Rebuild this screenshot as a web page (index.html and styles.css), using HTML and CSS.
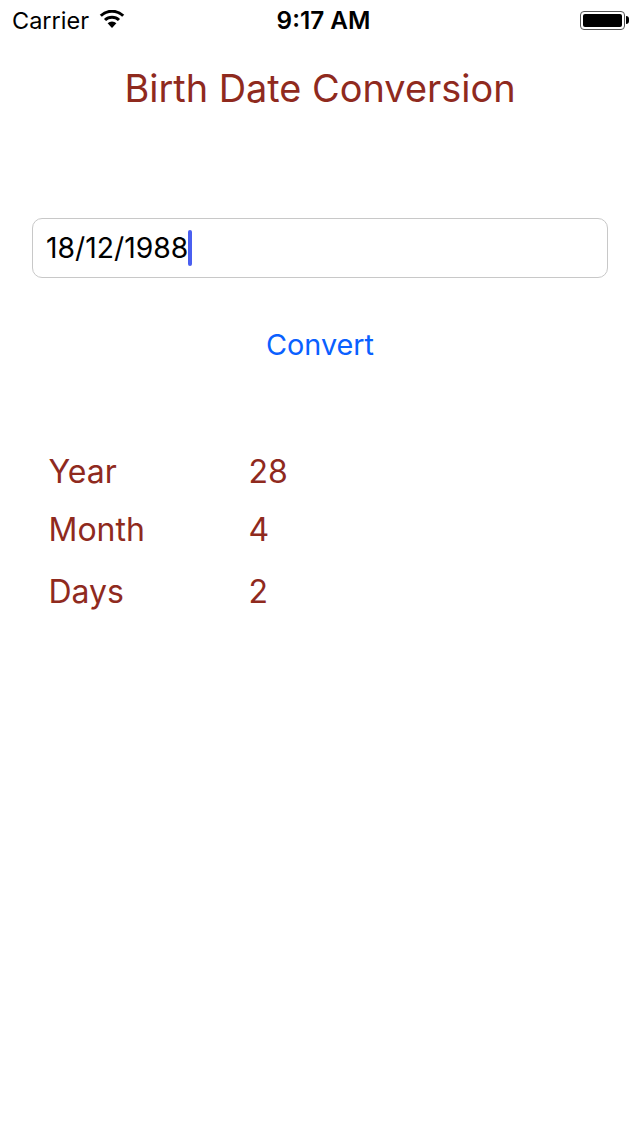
FILE: index.html
```html
<!DOCTYPE html>
<html lang="en">
<head>
    <meta charset="UTF-8">
    <meta name="viewport" content="width=device-width, initial-scale=1.0">
    <title>Birth Date Conversion</title>
    <link rel="stylesheet" href="styles.css">
</head>
<body>
    <div class="status-bar">
        <div class="status-left">
            <span class="carrier">Carrier</span>
            <svg class="wifi" width="26" height="18" viewBox="0 0 26 18">
                <path d="M13 18 L8.6 13.2 A6.4 6.4 0 0 1 17.4 13.2 Z" fill="#000"/>
                <path d="M6 10 A10 10 0 0 1 20 10" fill="none" stroke="#000" stroke-width="3"/>
                <path d="M1.8 5.8 A16 16 0 0 1 24.2 5.8" fill="none" stroke="#000" stroke-width="3"/>
            </svg>
        </div>
        <div class="clock">9:17 AM</div>
        <div class="battery">
            <div class="battery-body"><div class="battery-fill"></div></div>
            <div class="battery-tip"></div>
        </div>
    </div>

    <h1 class="title">Birth Date Conversion</h1>

    <div class="date-field">
        <span class="date-text">18/12/1988</span><span class="caret"></span>
    </div>

    <div class="convert">Convert</div>

    <div class="results">
        <div class="row row-year"><span class="label">Year</span><span>28</span></div>
        <div class="row row-month"><span class="label">Month</span><span>4</span></div>
        <div class="row row-days"><span class="label">Days</span><span>2</span></div>
    </div>
</body>
</html>
```

FILE: styles.css
```css
body {
    margin: 0;
    background: #fff;
    font-family: Inter, "Liberation Sans", sans-serif;
    color: #000;
}

.status-bar {
    height: 40px;
    display: grid;
    grid-template-columns: 1fr auto 1fr;
    align-items: center;
    padding: 0 11px 0 12px;
}

.status-left {
    display: flex;
    align-items: center;
    gap: 10px;
}

.carrier {
    font-size: 23.5px;
}

.wifi {
    margin-top: -2px;
}

.clock {
    margin-left: 6px;
    font-size: 24.3px;
    font-weight: 600;
}

.battery {
    display: flex;
    align-items: center;
    justify-content: flex-end;
}

.battery-body {
    box-sizing: border-box;
    width: 45px;
    height: 19px;
    padding: 2px;
    border: 1px solid #555;
    border-radius: 4px;
}

.battery-fill {
    height: 100%;
    background: #000;
    border-radius: 2px;
}

.battery-tip {
    width: 3px;
    height: 8px;
    background: #000;
    border-radius: 0 3px 3px 0;
    margin-left: 1px;
}

.title {
    margin: 24px 0 0;
    text-align: center;
    color: #8f2a1e;
    font-size: 37.9px;
    line-height: 48px;
    font-weight: 400;
}

.date-field {
    margin: 106px 32px 0;
    height: 58px;
    border: 1px solid #c8c8c8;
    border-radius: 10px;
    padding: 0 13px;
    display: flex;
    align-items: center;
    font-size: 28.3px;
}

.caret {
    width: 4px;
    height: 36px;
    background: #4a5ff0;
    border-radius: 2px;
}

.convert {
    margin-top: 49px;
    text-align: center;
    color: #0a60ff;
    font-size: 28.8px;
    line-height: 36px;
}

.results {
    margin: 88px 0 0 48.5px;
    color: #8f2a1e;
    font-size: 32px;
}

.row {
    display: flex;
    height: 40px;
    align-items: center;
}

.row-month {
    margin-top: 18px;
}

.row-days {
    margin-top: 22px;
}

.label {
    width: 200px;
}
```
